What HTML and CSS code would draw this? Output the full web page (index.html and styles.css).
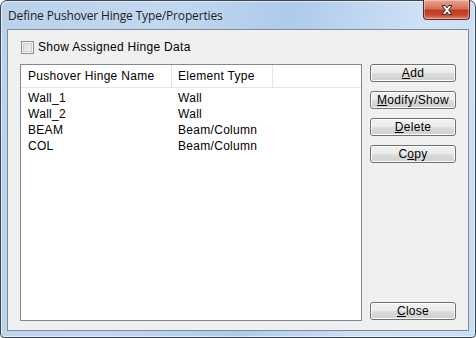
FILE: index.html
```html
<!DOCTYPE html>
<html>
<head>
<meta charset="utf-8">
<link rel="stylesheet" href="styles.css">
</head>
<body>
<div class="window">
  <div class="titlebar">
    <span class="title">Define Pushover Hinge Type/Properties</span>
    <div class="close-btn">
      <svg width="20" height="12" viewBox="0 0 20 12">
        <path d="M5 1.5h3.2l1.8 2.4 1.8-2.4H15l-3.3 4.5L15 10.5h-3.2L10 8.1l-1.8 2.4H5l3.3-4.5z" fill="#fff" stroke="#3b2a2a" stroke-width="1" stroke-linejoin="round"/>
      </svg>
    </div>
  </div>
  <div class="client">
    <label class="check-row">
      <span class="checkbox"></span>
      <span>Show Assigned Hinge Data</span>
    </label>
    <div class="main">
      <div class="listbox">
        <div class="list-header">
          <div class="col col-name">Pushover Hinge Name</div>
          <div class="col col-type">Element Type</div>
          <div class="col col-rest"></div>
        </div>
        <div class="list-body">
          <div class="row"><span class="cell cell-name">Wall_1</span><span class="cell">Wall</span></div>
          <div class="row"><span class="cell cell-name">Wall_2</span><span class="cell">Wall</span></div>
          <div class="row"><span class="cell cell-name">BEAM</span><span class="cell">Beam/Column</span></div>
          <div class="row"><span class="cell cell-name">COL</span><span class="cell">Beam/Column</span></div>
        </div>
      </div>
      <div class="buttons">
        <div class="btn-group">
          <button class="btn"><u>A</u>dd</button>
          <button class="btn"><u>M</u>odify/Show</button>
          <button class="btn"><u>D</u>elete</button>
          <button class="btn">C<u>o</u>py</button>
        </div>
        <button class="btn"><u>C</u>lose</button>
      </div>
    </div>
  </div>
</div>
</body>
</html>
```

FILE: styles.css
```css
* { box-sizing: border-box; }
html, body { margin: 0; padding: 0; background: #ffffff; }
body {
  font-family: "Liberation Sans", Arial, sans-serif;
  font-size: 12px;
  letter-spacing: 0.3px;
  color: #000;
}
.window {
  width: 476px;
  height: 338px;
  border: 1px solid #3c4650;
  border-radius: 7px 7px 4px 4px;
  background: linear-gradient(100deg, #b9d1ea 0%, #c2d8f0 30%, #aecbeb 55%, #cfe1f5 80%, #c9ddf3 100%);
  padding: 0 6px 6px 6px;
  display: flex;
  flex-direction: column;
  box-shadow: inset 1px 1px 0 rgba(255,255,255,0.6), inset -1px -1px 0 rgba(255,255,255,0.5);
}
.titlebar {
  height: 28px;
  display: flex;
  align-items: flex-start;
  position: relative;
}
.title {
  padding-top: 6px;
  padding-left: 1px;
  font-family: "Open Sans", "Liberation Sans", sans-serif;
  font-size: 12px;
  letter-spacing: -0.15px;
  color: #1e1e1e;
}
.close-btn {
  position: absolute;
  right: -1px;
  top: -1px;
  width: 47px;
  height: 20px;
  border: 1px solid #5a2a22;
  border-top: none;
  border-radius: 0 0 4px 4px;
  background: linear-gradient(180deg, #e8a493 0%, #d4725b 45%, #c0391f 55%, #c84a30 80%, #df8a70 100%);
  display: flex;
  align-items: center;
  justify-content: center;
  box-shadow: inset 0 0 0 1px rgba(255,255,255,0.35);
}
.close-btn svg { display: block; }
.client {
  flex: 1;
  background: #f0f0f0;
  border: 1px solid #7d8a99;
  padding: 11px 12px 9px 12px;
  display: flex;
  flex-direction: column;
}
.check-row {
  display: flex;
  align-items: center;
  gap: 4px;
  height: 13px;
  line-height: 13px;
}
.checkbox {
  width: 13px;
  height: 13px;
  border: 1px solid #8f8f8f;
  background: linear-gradient(135deg, #dcdcdc 0%, #f4f4f4 100%);
  box-shadow: inset 0 0 0 1px #f4f4f4, inset 0 0 0 2px #cfcfcf;
  margin-left: 1px;
}
.main {
  margin-top: 10px;
  flex: 1;
  display: flex;
  gap: 8px;
}
.listbox {
  width: 342px;
  background: #ffffff;
  border: 1px solid #828790;
}
.list-header {
  display: flex;
  height: 23px;
  border-bottom: 1px solid #e5e5e5;
}
.col {
  height: 22px;
  line-height: 22px;
  border-right: 1px solid #e5e5e5;
  padding-left: 7px;
}
.col-name { width: 151px; }
.col-type { width: 101px; padding-left: 6px; }
.col-rest { width: 0; border-right: none; }
.list-body { padding-top: 2px; }
.row {
  display: flex;
  height: 16px;
  line-height: 16px;
}
.cell { padding-left: 7px; }
.cell-name { width: 150px; }
.buttons {
  width: 86px;
  display: flex;
  flex-direction: column;
  justify-content: space-between;
  padding-bottom: 1px;
}
.btn-group {
  display: flex;
  flex-direction: column;
  gap: 9px;
}
.btn {
  width: 86px;
  height: 18px;
  padding: 0;
  margin: 0;
  font-family: "Liberation Sans", Arial, sans-serif;
  font-size: 12px;
  letter-spacing: 0.3px;
  color: #000;
  border: 1px solid #707070;
  border-radius: 3px;
  background: linear-gradient(180deg, #f2f2f2 0%, #ebebeb 50%, #dddddd 51%, #cfcfcf 100%);
  box-shadow: inset 0 0 0 1px #fcfcfc;
  line-height: 15px;
}
```
